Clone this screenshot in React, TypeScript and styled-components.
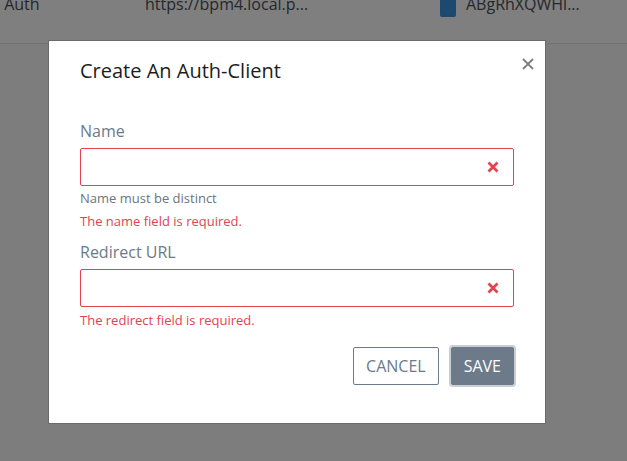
import React from 'react';
import styled, {createGlobalStyle} from 'styled-components';

const GlobalStyle = createGlobalStyle`
    html, body {
        margin: 0;
        padding: 0;
        height: 100%;
        background: #fbfbfb;
        font-family: "Open Sans", "Liberation Sans", sans-serif;
        overflow: hidden;
    }
`

const Page = styled.div`
    width: 627px;
    height: 461px;
    overflow: hidden;
`

const TableRow = styled.div`
    display: flex;
    align-items: flex-start;
    height: 63px;
    margin-top: -19px;
    padding-top: 11px;
    box-sizing: border-box;
    background: #ffffff;
    border-bottom: 1px solid #dee2e6;
    font-size: 16px;
    line-height: 24px;
    color: #4a4f55;
`

const Cell = styled.div<{w: number}>`
    width: ${props => props.w}px;
    flex: none;
    display: flex;
    align-items: flex-start;
    gap: 10px;
    white-space: nowrap;
`

const KeyIcon = styled.span`
    display: inline-block;
    width: 16px;
    height: 24px;
    margin-top: 1px;
    border-radius: 2px;
    background: #3a92e2;
`

const Backdrop = styled.div`
    position: fixed;
    inset: 0;
    background: rgba(0, 0, 0, 0.5);
    padding: 40px 0 0 48px;
`

const Modal = styled.div`
    width: 498px;
    box-sizing: border-box;
    background: #ffffff;
    border: 1px solid #6a6a6a;
    padding: 16px 31px 38px;
    position: relative;
`

const Title = styled.h5`
    margin: 0;
    font-size: 20px;
    font-weight: 400;
    line-height: 27px;
    color: #1b1e21;
`

const CloseButton = styled.button`
    position: absolute;
    top: 15px;
    right: 9px;
    width: 16px;
    height: 16px;
    padding: 0;
    border: none;
    background: none;
    display: flex;
    align-items: center;
    justify-content: center;
    cursor: pointer;
`

const Form = styled.div`
    margin-top: 35px;
    display: flex;
    flex-direction: column;
`

const Group = styled.div`
    display: flex;
    flex-direction: column;
    & + & {
        margin-top: 9px;
    }
`

const Label = styled.label`
    font-size: 16px;
    line-height: 24px;
    color: #6c7a89;
    margin-bottom: 5px;
`

const InputWrap = styled.div`
    position: relative;
    height: 38px;
    box-sizing: border-box;
    border: 1px solid #e3424f;
    border-radius: 2px;
    display: flex;
    align-items: center;
    justify-content: flex-end;
    padding-right: 14px;
`

const Input = styled.input`
    flex: 1;
    min-width: 0;
    height: 100%;
    border: none;
    outline: none;
    background: transparent;
    font-family: inherit;
    font-size: 16px;
    padding: 0 12px;
`

const Help = styled.small<{error?: boolean}>`
    display: block;
    font-size: 13px;
    line-height: 19px;
    color: ${props => props.error ? '#e3424f' : '#6c757d'};
    margin-top: ${props => props.error ? '4px' : '3px'};
`

const Footer = styled.div`
    display: flex;
    justify-content: flex-end;
    gap: 12px;
    margin-top: 17px;
`

const Button = styled.button<{primary?: boolean}>`
    height: 38px;
    box-sizing: border-box;
    padding: 0 12px;
    font-family: inherit;
    font-size: 16px;
    text-transform: uppercase;
    border-radius: 2px;
    border: 1px solid #6c7a89;
    color: ${props => props.primary ? '#ffffff' : '#6c7a89'};
    background: ${props => props.primary ? '#6c7a89' : '#ffffff'};
    box-shadow: ${props => props.primary ? '0 0 0 2px #c9ced4' : 'none'};
    cursor: pointer;
`

const ErrorX = () => (
    <svg width="12" height="12" viewBox="0 0 12 12">
        <path d="M1.5 1.5 L10.5 10.5 M10.5 1.5 L1.5 10.5" stroke="#e3424f" strokeWidth="2.8" strokeLinecap="butt" />
    </svg>
)

interface FieldProps {
    label: string;
    help?: string;
    error: string;
}

const Field = ({label, help, error}: FieldProps) => (
    <Group>
        <Label>{label}</Label>
        <InputWrap>
            <Input />
            <ErrorX />
        </InputWrap>
        {help ? <Help>{help}</Help> : null}
        <Help error>{error}</Help>
    </Group>
)

const App = () => {
    return (
        <Page>
            <GlobalStyle />
            <TableRow>
                <Cell w={145}>&nbsp;Auth</Cell>
                <Cell w={295}>https://bpm4.local.p...</Cell>
                <Cell w={180}><KeyIcon />ABgRhXQWHl...</Cell>
            </TableRow>
            <Backdrop>
                <Modal>
                    <Title>Create An Auth-Client</Title>
                    <CloseButton>
                        <svg width="12" height="12" viewBox="0 0 12 12">
                            <path d="M1 1 L11 11 M11 1 L1 11" stroke="#7e7e7e" strokeWidth="1.8" />
                        </svg>
                    </CloseButton>
                    <Form>
                        <Field label="Name" help="Name must be distinct" error="The name field is required." />
                        <Field label="Redirect URL" error="The redirect field is required." />
                    </Form>
                    <Footer>
                        <Button>Cancel</Button>
                        <Button primary>Save</Button>
                    </Footer>
                </Modal>
            </Backdrop>
        </Page>
    );
};

export default App;
